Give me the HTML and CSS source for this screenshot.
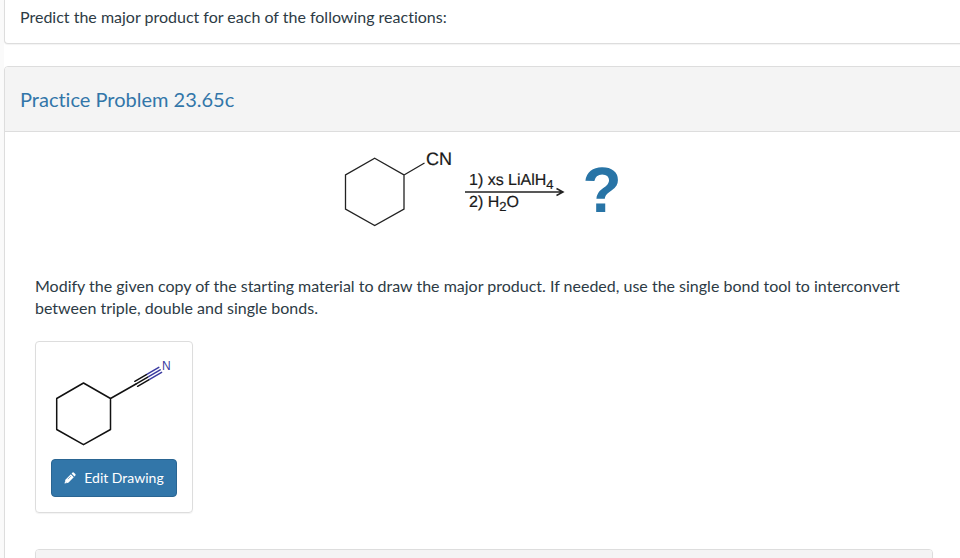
FILE: index.html
```html
<!DOCTYPE html>
<html lang="en">
  <head>
    <meta charset="utf-8">
    <title>Practice Problem 23.65c</title>
    <link rel="stylesheet" href="styles.css">
  </head>
  <body>
    <main class="content">
      <section class="panel panel-intro">
        <p>Predict the major product for each of the following reactions:</p>
      </section>

      <section class="panel">
        <header class="panel-heading">
          <h2 class="panel-title">Practice Problem 23.65c</h2>
        </header>
        <div class="panel-body">
          <svg class="reaction" viewBox="334 140 300 100" role="img" aria-label="Reaction scheme">
            <!-- cyclohexane ring with nitrile -->
            <path class="bond" d="M374.7 158.2 404 175V209L374.7 225.5 345.5 209V175ZM404 175 424.5 163" />
            <text class="atom" x="426" y="165">CN</text>
            <!-- reagents and arrow -->
            <text class="reagent" x="469" y="185">1) xs LiAlH<tspan class="sub" dy="4">4</tspan></text>
            <path class="arrow" d="M465 192H563M556.5 188.5 563 192 556.5 195.5" />
            <text class="reagent" x="469" y="207">2) H<tspan class="sub" dy="4">2</tspan><tspan dy="-4">O</tspan></text>
            <!-- unknown product -->
            <text class="unknown" x="602" y="212">?</text>
          </svg>

          <p class="instructions">Modify the given copy of the starting material to draw the major product. If needed, use the single bond tool to interconvert between triple, double and single bonds.</p>

          <div class="drawing">
            <svg class="molecule" viewBox="51 357 126 102" role="img" aria-label="Starting material">
              <defs>
                <linearGradient id="triple" gradientUnits="userSpaceOnUse" x1="136" y1="384" x2="160" y2="370">
                  <stop offset="0.5" stop-color="#111" />
                  <stop offset="0.5" stop-color="#3a3aa0" />
                </linearGradient>
              </defs>
              <path class="mol-bond" d="M83.5 383 110.5 398.5V429.5L83.5 444.7 56.7 429.5V398.5ZM110.5 398.5 136 384" />
              <path class="mol-triple" d="M134.8 381.3 158.8 367.3M136.2 383.8 160.2 369.8M137.6 386.3 161.6 372.3" />
              <text class="mol-atom" x="162" y="370">N</text>
            </svg>
            <button class="btn" type="button">
              <svg class="icon" viewBox="0 0 14 14" aria-hidden="true">
                <path d="M.6 13.4 1.6 9 8 2.6 11.4 6 5 12.4ZM8.8 1.8 10 .7Q10.8 0 11.6.8L13.2 2.4Q14 3.2 13.3 4L12.2 5.2Z" />
                <path class="icon-cut" d="M4.5 8.3 8 4.8M1.8 11.3 2.7 12.2" />
              </svg>
              Edit Drawing
            </button>
          </div>

          <section class="panel panel-next">
            <header class="panel-heading"></header>
          </section>
        </div>
      </section>
    </main>
  </body>
</html>
```
FILE: styles.css
```css
body {
  margin: 0;
  height: 100vh;
  overflow: hidden;
  background: #fafafa;
  color: #2d3b45;
  font-family: Lato, "Liberation Sans", sans-serif;
  font-size: 16px;
  line-height: 22px;
  font-variant-ligatures: none;
}

p {
  margin: 0;
}

/* runs slightly past the right edge of the window */
.content {
  margin: 0 -4px 0 4px;
  background: #fff;
}

.panel {
  border: 1px solid #ddd;
  border-radius: 4px;
  background: #fff;
  box-shadow: 0 1px 1px rgba(0, 0, 0, 0.05);
}

.panel-intro {
  margin-bottom: 22px;
  padding: 6px 15px 15px;
  border-top: 0;
  border-radius: 0 0 4px 4px;
}

.panel-heading {
  padding: 20px 15px;
  border-bottom: 1px solid #ddd;
  border-radius: 3px 3px 0 0;
  background: #f4f4f4;
}

.panel-title {
  margin: 0;
  color: #3276a9;
  font-size: 20px;
  font-weight: 400;
  line-height: 24px;
}

.panel-body {
  padding: 8px 30px;
}

.reaction {
  display: block;
  width: 300px;
  height: 100px;
  margin: 0 auto 35px;
  font-family: "Liberation Sans", Arial, sans-serif;
  text-rendering: geometricPrecision;
}

.bond,
.arrow {
  fill: none;
  stroke: #222;
  stroke-width: 1.3;
}

.arrow {
  stroke-width: 1.5;
}

.atom,
.reagent {
  fill: #1a1a1a;
  stroke: #1a1a1a;
  stroke-width: 0.2;
}

.atom {
  font-size: 18px;
}

.reagent {
  font-size: 16px;
}

.sub {
  font-size: 13px;
}

.unknown {
  fill: #2874a6;
  font-size: 64px;
  font-weight: 700;
  text-anchor: middle;
}

.instructions {
  margin-bottom: 22px;
}

.drawing {
  display: inline-flex;
  flex-direction: column;
  padding: 15px;
  border: 1px solid #ddd;
  border-radius: 4px;
  box-shadow: 0 1px 1px rgba(0, 0, 0, 0.05);
  vertical-align: top;
}

.molecule {
  width: 126px;
  height: 102px;
  font-family: "Liberation Sans", Arial, sans-serif;
}

.mol-bond,
.mol-triple {
  fill: none;
  stroke: #111;
  stroke-width: 1.5;
  stroke-linecap: round;
  stroke-linejoin: round;
}

.mol-triple {
  stroke: url(#triple);
}

.mol-atom {
  fill: #3a3aa0;
  font-size: 12px;
}

.btn {
  display: flex;
  align-items: center;
  justify-content: center;
  gap: 8px;
  padding: 7px 12px;
  border: 1px solid #2a6592;
  border-radius: 4px;
  background: #3276a9;
  color: #fff;
  font: 14px/22px Lato, "Liberation Sans", sans-serif;
  white-space: nowrap;
  cursor: pointer;
}

.icon {
  width: 12px;
  height: 12px;
  fill: #fff;
}

.icon-cut {
  fill: none;
  stroke: #3276a9;
  stroke-width: 0.7;
}

.panel-next {
  margin-top: 36px;
}
```
